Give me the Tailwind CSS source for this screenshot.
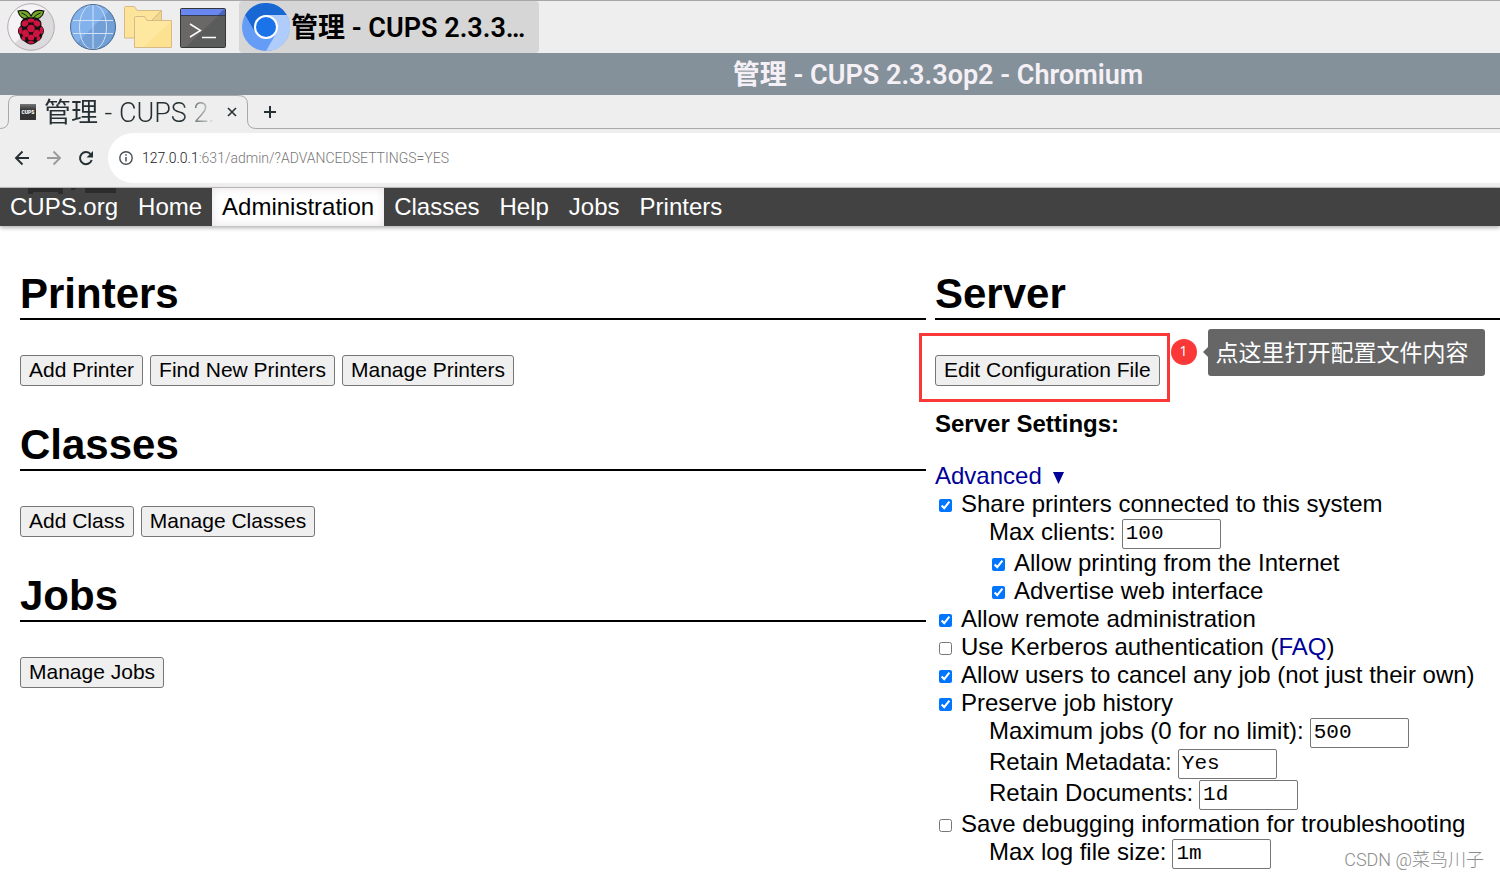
<!DOCTYPE html>
<html lang="zh">
<head>
    <meta charset="UTF-8">
    <meta name="viewport" content="width=device-width, initial-scale=1.0">
    <title>管理 - CUPS 2.3.3op2</title>
    <script src="https://cdn.jsdelivr.net/npm/@tailwindcss/browser@4"></script>
</head>
<body class="relative min-h-screen overflow-x-hidden bg-white font-['Liberation_Sans','Noto_Sans_CJK_SC',sans-serif] text-2xl leading-7 text-black">
    <!-- Desktop taskbar -->
    <div class="flex h-[53px] items-center border-t border-[#aaa6a7] bg-[#eeeeee] pl-[7px] font-[Roboto,'Noto_Sans_CJK_SC',sans-serif]">
        <button aria-label="Menu" class="mr-[15px]">
            <svg class="size-12" viewBox="0 0 48 48">
                <circle cx="24" cy="24" r="23.3" fill="#f5f3f5" />
                <path d="M40.5 7.5A23.3 23.3 0 0 1 7.5 40.5Z" fill="#dcdadd" />
                <circle cx="24" cy="24" r="23.3" fill="none" stroke="#b0adb0" />
                <path d="M24 17C16 17 12 13 11 8c4-1 9-1 11.500 2.500L24 13l1.500-2.500C28 7 33 7 37 8c-1 5-5 9-13 9Z" fill="#75a928" stroke="#111" stroke-width="1.200" />
                <path d="M14.500 10c3 1 5 2.500 7.500 5M33.500 10c-3 1-5 2.500-7.500 5" fill="none" stroke="#111" />
                <path d="M24 14.500c4-1 8 .5 10 4 .5 1.500.7 3 .4 4.500 3 2 3.500 6.500 1 9-.4 3-2 5.500-4.900 6.500-1.500 1.500-4 3-6.500 3s-5-1.500-6.500-3c-2.900-1-4.500-3.500-4.900-6.500-2.500-2.500-2-7 1-9-.3-1.500-.1-3 .4-4.500 2-3.500 6-5 10-4Z" fill="#111" />
                <g fill="#cd1441">
                    <ellipse cx="24" cy="17.500" rx="3.600" ry="2" />
                    <ellipse cx="18" cy="20.500" rx="3.500" ry="2.900" transform="rotate(-32 18 20.500)" />
                    <ellipse cx="30" cy="20.500" rx="3.500" ry="2.900" transform="rotate(32 30 20.500)" />
                    <circle cx="24" cy="25.500" r="3.800" />
                    <ellipse cx="13.500" cy="27.500" rx="1.800" ry="3.400" />
                    <ellipse cx="34.500" cy="27.500" rx="1.800" ry="3.400" />
                    <ellipse cx="18.500" cy="30.500" rx="3.300" ry="3.900" transform="rotate(-25 18.500 30.500)" />
                    <ellipse cx="29.500" cy="30.500" rx="3.300" ry="3.900" transform="rotate(25 29.500 30.500)" />
                    <ellipse cx="24" cy="34.500" rx="3.300" ry="3" />
                    <ellipse cx="16.500" cy="35.500" rx="1.700" ry="2.300" transform="rotate(-35 16.500 35.500)" />
                    <ellipse cx="31.500" cy="35.500" rx="1.700" ry="2.300" transform="rotate(35 31.500 35.500)" />
                    <ellipse cx="24" cy="39.300" rx="3.200" ry="1.300" />
                </g>
            </svg>
        </button>
        <button aria-label="Web browser" class="mr-2">
            <svg class="h-12 w-[46px]" viewBox="0 0 46 48">
                <circle cx="23" cy="24" r="22.500" fill="#82b1ec" />
                <path d="M39 8A22.500 22.500 0 0 1 7 40Z" fill="#719fd6" />
                <g fill="none" stroke="#d2e2f6">
                    <path d="M23 2v44M3 17.500h40M3 30.500h40" />
                    <ellipse cx="23" cy="24" rx="13.500" ry="22.500" />
                </g>
                <circle cx="23" cy="24" r="22.500" fill="none" stroke="#486a91" />
            </svg>
        </button>
        <button aria-label="File manager" class="mr-2">
            <svg class="size-12" viewBox="0 0 48 48" stroke="#d8b988">
                <path d="M.5 4.500q0-1 1-1h9l2.500 4h24.500V35H.5Z" fill="#fce49a" />
                <path d="M37.500 7.500V35H10Z" fill="#efd58d" />
                <path d="M10.500 14.500q0-1 1-1h9l2.500 4h24.500V44.500h-37Z" fill="#fee89f" />
                <path d="M47 18v26H20Z" fill="#fce191" stroke="none" />
            </svg>
        </button>
        <button aria-label="Terminal" class="mr-[13px]">
            <svg class="h-12 w-[46px]" viewBox="0 0 46 48">
                <rect x=".5" y="5.500" width="45" height="39" rx="1" fill="#6a6767" stroke="#33373a" />
                <path d="M45 6v38H6Z" fill="#5a5c5b" />
                <path d="M1 6h44v6H1Z" fill="#6a86ef" />
                <path d="M45 6v6h-7l6-6Z" fill="#4c65ba" />
                <path d="M1 12.500h44" stroke="#333c56" />
                <path d="m10 21 10.500 6.500L10 34M22 34.500h14" fill="none" stroke="#fff" stroke-width="1.500" />
            </svg>
        </button>
        <button class="flex h-[52px] w-[300px] items-center rounded-sm bg-[#d6d6d6] pl-[3px] text-left text-[27px] font-semibold">
            <svg class="size-12 shrink-0" viewBox="0 0 48 48">
                <circle cx="24" cy="24" r="24" fill="#659cf6" />
                <path d="M24 12h20.800A24 24 0 0 1 24 48l10.400-18Z" fill="#afccfb" />
                <path d="M3.200 12A24 24 0 0 1 44.800 12H24a12 12 0 0 0-10.400 18Z" fill="#1967d2" />
                <circle cx="24" cy="24" r="12" fill="#fff" />
                <circle cx="24" cy="24" r="10" fill="#1a73e8" />
            </svg>
            <span class="ml-px pt-[2px] leading-9 whitespace-nowrap">管理 - CUPS 2.3.3…</span>
        </button>
    </div>

    <!-- Window title -->
    <div class="h-[42px] bg-[#84919a] pl-[376px] text-center font-[Roboto,'Noto_Sans_CJK_SC',sans-serif] text-[27px] leading-[44px] font-semibold text-[#f5f0f5]">管理 - CUPS 2.3.3op2 - Chromium</div>

    <!-- Browser chrome -->
    <div class="bg-[#eeeeee] font-[Roboto,'Noto_Sans_CJK_SC',sans-serif] text-[#263034]">
        <div class="flex h-[34px]">
            <div class="relative flex w-64 items-center pl-5">
                <svg class="absolute inset-0 h-[34px] w-64" viewBox="0 0 256 34" fill="none" stroke="#a9a9a9">
                    <path d="M0 33.500Q8.500 33.500 8.500 25V9Q8.500 .5 17 .5H238Q247.500 .5 247.500 9V25Q247.500 33.500 256 33.500" />
                </svg>
                <span class="flex size-4 items-center justify-center bg-linear-to-b from-[#777777] to-[#333333] to-40% text-[5px] leading-4 font-black text-white">CUPS</span>
                <span class="ml-2 w-[172px] mask-r-from-80% mask-r-to-100% pt-[2px] text-[27px] leading-9 font-light whitespace-nowrap"><span class="font-normal">管理</span> - CUPS 2.</span>
                <button aria-label="Close tab" class="relative ml-[11px]">
                    <svg class="size-[10px]" viewBox="0 0 10 10" stroke="#263034" stroke-width="1.600"><path d="m1 1 8 8M9 1 1 9" /></svg>
                </button>
            </div>
            <div class="flex flex-1 items-center border-b border-[#a9a9a9] pl-[7px]">
                <button aria-label="New tab">
                    <svg class="size-[14px]" viewBox="0 0 14 14" stroke="#263034" stroke-width="2"><path d="M7 1v12M1 7h12" /></svg>
                </button>
            </div>
        </div>
        <div class="flex h-[59px] items-center gap-4 border-b border-[#bdbdbd] pl-[14px]">
            <button aria-label="Back">
                <svg class="size-4" viewBox="0 0 16 16" fill="none" stroke="#263034" stroke-width="1.900"><path d="M15 8H2.500M8.500 1.500 2 8l6.500 6.500" /></svg>
            </button>
            <button aria-label="Forward">
                <svg class="size-4" viewBox="0 0 16 16" fill="none" stroke="#9b9b9b" stroke-width="1.900"><path d="M1 8h12.500M7.500 1.500 14 8l-6.500 6.500" /></svg>
            </button>
            <button aria-label="Reload">
                <svg class="size-4" viewBox="0 0 16 16"><path d="M12.800 4.500A6 6 0 1 0 13.700 10" fill="none" stroke="#263034" stroke-width="2" /><path d="M15 1v6.500H8.500Z" fill="#263034" /></svg>
            </button>
            <div class="-ml-[2px] flex h-[50px] flex-1 items-center rounded-l-full bg-white pl-[11px] text-sm leading-5 font-light">
                <svg class="mr-[9px] size-[14px]" viewBox="0 0 14 14"><circle cx="7" cy="7" r="6.200" fill="none" stroke="#4a4f54" stroke-width="1.400" /><path d="M7 6v4.500M7 3.300v1.500" stroke="#4a4f54" stroke-width="1.500" /></svg>
                <a href="#" class="text-[#777777]"><span class="text-[#202124]">127.0.0.1</span>:631/admin/?ADVANCEDSETTINGS=YES</a>
            </div>
        </div>
    </div>

    <!-- CUPS navigation -->
    <nav class="relative flex h-[38px] bg-[#424242] leading-[38px] text-white shadow-[0_2px_4px_rgba(0,0,0,0.3)]">
        <svg class="absolute top-0 left-7 h-[6px] w-[88px]" viewBox="0 0 88 6" fill="#2c2c2c"><path d="M0 0h35v6h-5V4H5v2H0ZM43 0h6l-3 2h-3ZM57 0h31v5H57Z" /></svg>
        <a href="#" class="relative px-[10px]">CUPS.org</a>
        <a href="#" class="px-[10px]">Home</a>
        <a href="#" class="bg-white px-[10px] text-black shadow-[inset_0_0_8px_rgba(160,130,150,0.25)]">Administration</a>
        <a href="#" class="px-[10px]">Classes</a>
        <a href="#" class="px-[10px]">Help</a>
        <a href="#" class="px-[10px]">Jobs</a>
        <a href="#" class="px-[10px]">Printers</a>
    </nav>

    <main class="grid grid-cols-[906fr_565fr] gap-x-[9px] pt-11 pl-5">
        <div class="flex flex-col gap-[35px]">
            <section>
                <h2 class="border-b-2 border-black text-[42px] leading-[48px] font-bold">Printers</h2>
                <div class="mt-[35px] flex gap-[7px] text-[21px] leading-7">
                    <button class="h-[31px] rounded-[3px] border border-[#767676] bg-[#efefef] px-2 pb-[2px]">Add Printer</button>
                    <button class="h-[31px] rounded-[3px] border border-[#767676] bg-[#efefef] px-2 pb-[2px]">Find New Printers</button>
                    <button class="h-[31px] rounded-[3px] border border-[#767676] bg-[#efefef] px-2 pb-[2px]">Manage Printers</button>
                </div>
            </section>
            <section>
                <h2 class="border-b-2 border-black text-[42px] leading-[48px] font-bold">Classes</h2>
                <div class="mt-[35px] flex gap-[7px] text-[21px] leading-7">
                    <button class="h-[31px] rounded-[3px] border border-[#767676] bg-[#efefef] px-2 pb-[2px]">Add Class</button>
                    <button class="h-[31px] rounded-[3px] border border-[#767676] bg-[#efefef] px-2 pb-[2px]">Manage Classes</button>
                </div>
            </section>
            <section>
                <h2 class="border-b-2 border-black text-[42px] leading-[48px] font-bold">Jobs</h2>
                <div class="mt-[35px] flex gap-[7px] text-[21px] leading-7">
                    <button class="h-[31px] rounded-[3px] border border-[#767676] bg-[#efefef] px-2 pb-[2px]">Manage Jobs</button>
                </div>
            </section>
        </div>

        <section>
            <h2 class="border-b-2 border-black text-[42px] leading-[48px] font-bold">Server</h2>
            <div class="relative mt-[35px] flex w-fit text-[21px] leading-7">
                <button class="h-[31px] rounded-[3px] border border-[#767676] bg-[#efefef] px-2 pb-[2px]">Edit Configuration File</button>
                <!-- Step marker and its note -->
                <div class="pointer-events-none absolute -top-[22px] -right-[10px] -bottom-4 -left-4 border-3 border-[#fb3838]"></div>
                <div class="absolute -top-4 left-full ml-[11px] size-[26px] rounded-full bg-[#fb3838] text-center font-['Noto_Sans',sans-serif] text-sm leading-6 text-white">1</div>
                <div class="absolute -top-[26px] left-full ml-12 h-[47px] w-[277px] rounded-[3px] bg-[#666666] pl-2 font-['Noto_Sans_CJK_SC',sans-serif] text-[23px] leading-[44px] whitespace-nowrap text-white">
                    <svg class="absolute top-[18px] -left-[5px] h-[10px] w-[5px]" viewBox="0 0 5 10"><path d="M5 0v10L0 5Z" fill="#666666" /></svg>
                    点这里打开配置文件内容
                </div>
            </div>

            <form class="pt-6 whitespace-nowrap">
                <h3 class="mb-6 font-bold">Server Settings:</h3>
                <a href="#" class="flex items-center gap-[10px] text-[#000099]">Advanced
                    <svg class="mt-[3px] h-3 w-[13px]" viewBox="0 0 13 12"><path d="M1 0h11L6.500 12Z" fill="#000099" /></svg>
                </a>
                <div class="flex items-center gap-[9px] pl-1">
                    <input type="checkbox" id="share" class="mt-[3px] size-[13px]" checked>
                    <label for="share">Share printers connected to this system</label>
                </div>
                <div class="flex gap-[6px] pl-[54px]">
                    <label for="clients">Max clients:</label>
                    <input type="text" id="clients" value="100" class="mt-px h-[30px] w-[99px] rounded-[2px] border border-[#767676] px-[3px] pb-[2px] font-['Liberation_Mono',monospace] text-[21px]">
                </div>
                <div class="flex items-center gap-[9px] pl-[57px]">
                    <input type="checkbox" id="internet" class="mt-[3px] size-[13px]" checked>
                    <label for="internet">Allow printing from the Internet</label>
                </div>
                <div class="flex items-center gap-[9px] pl-[57px]">
                    <input type="checkbox" id="web" class="mt-[3px] size-[13px]" checked>
                    <label for="web">Advertise web interface</label>
                </div>
                <div class="flex items-center gap-[9px] pl-1">
                    <input type="checkbox" id="remote" class="mt-[3px] size-[13px]" checked>
                    <label for="remote">Allow remote administration</label>
                </div>
                <div class="flex items-center gap-[9px] pl-1">
                    <input type="checkbox" id="kerberos" class="mt-[3px] size-[13px]">
                    <label for="kerberos">Use Kerberos authentication (<a href="#" class="text-[#000099]">FAQ</a>)</label>
                </div>
                <div class="flex items-center gap-[9px] pl-1">
                    <input type="checkbox" id="cancel" class="mt-[3px] size-[13px]" checked>
                    <label for="cancel">Allow users to cancel any job (not just their own)</label>
                </div>
                <div class="flex items-center gap-[9px] pl-1">
                    <input type="checkbox" id="history" class="mt-[3px] size-[13px]" checked>
                    <label for="history">Preserve job history</label>
                </div>
                <div class="flex gap-[6px] pl-[54px]">
                    <label for="maxjobs">Maximum jobs (0 for no limit):</label>
                    <input type="text" id="maxjobs" value="500" class="mt-px h-[30px] w-[99px] rounded-[2px] border border-[#767676] px-[3px] pb-[2px] font-['Liberation_Mono',monospace] text-[21px]">
                </div>
                <div class="flex gap-[6px] pl-[54px]">
                    <label for="metadata">Retain Metadata:</label>
                    <input type="text" id="metadata" value="Yes" class="mt-px h-[30px] w-[99px] rounded-[2px] border border-[#767676] px-[3px] pb-[2px] font-['Liberation_Mono',monospace] text-[21px]">
                </div>
                <div class="flex gap-[6px] pl-[54px]">
                    <label for="documents">Retain Documents:</label>
                    <input type="text" id="documents" value="1d" class="mt-px h-[30px] w-[99px] rounded-[2px] border border-[#767676] px-[3px] pb-[2px] font-['Liberation_Mono',monospace] text-[21px]">
                </div>
                <div class="flex items-center gap-[9px] pl-1">
                    <input type="checkbox" id="debug" class="mt-[3px] size-[13px]">
                    <label for="debug">Save debugging information for troubleshooting</label>
                </div>
                <div class="flex gap-[6px] pl-[54px]">
                    <label for="logsize">Max log file size:</label>
                    <input type="text" id="logsize" value="1m" class="mt-px h-[30px] w-[99px] rounded-[2px] border border-[#767676] px-[3px] pb-[2px] font-['Liberation_Mono',monospace] text-[21px]">
                </div>
            </form>
        </section>
    </main>

    <div class="absolute right-4 bottom-[6px] font-[Roboto,'Noto_Sans_CJK_SC',sans-serif] text-lg leading-7 font-light text-[#8c8c8c]">CSDN @菜鸟川子</div>
</body>
</html>
